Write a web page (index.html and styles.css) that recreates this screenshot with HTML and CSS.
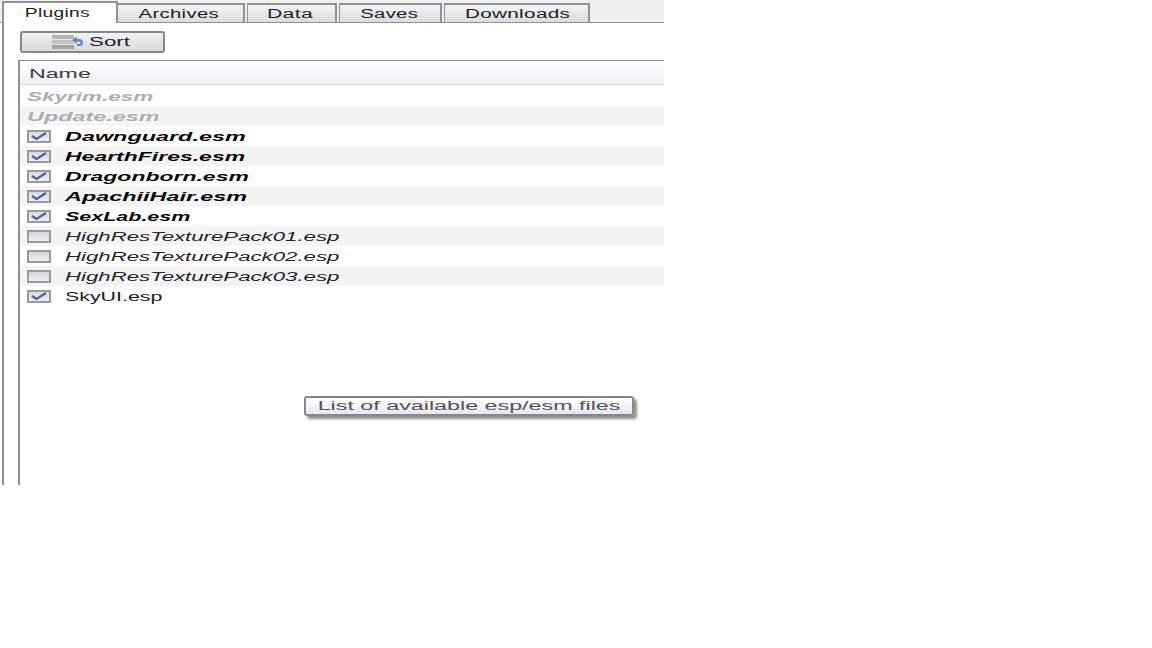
FILE: index.html
```html
<!DOCTYPE html>
<html lang="en">
<head>
<meta charset="utf-8">
<title>Plugins</title>
<link rel="stylesheet" href="styles.css">
</head>
<body>
<div class="window">
  <div class="tabs">
    <div class="tab active"><span class="t">Plugins</span></div>
    <div class="tab archives"><span class="t">Archives</span></div>
    <div class="tab data"><span class="t">Data</span></div>
    <div class="tab saves"><span class="t">Saves</span></div>
    <div class="tab downloads"><span class="t">Downloads</span></div>
  </div>
  <div class="panel">
    <div class="toolbar">
      <button class="sort">
        <svg class="sort-icon" width="32" height="14" viewBox="0 0 32 14">
          <rect x="0" y="0" width="22" height="4" fill="#b4b6b5"/>
          <rect x="0" y="5" width="22" height="4" fill="#c2c4c3"/>
          <rect x="0" y="10" width="22" height="4" fill="#a4a6a5"/>
          <path d="M20 5 L25 1.5 V4 H27 Q31 4 31 8 Q31 11 27 11 H25 V9 H27 Q28.5 9 28.5 7.5 Q28.5 6.5 27 6.5 H25 V9 Z" fill="#5b8bc0"/>
        </svg>
        <span class="t">Sort</span>
      </button>
    </div>
    <div class="tree">
      <div class="head"><span class="t">Name</span></div>
      <div class="rows">
        <div class="row off skyrim"><span class="t">Skyrim.esm</span></div>
        <div class="row off alt"><span class="t">Update.esm</span></div>
        <div class="row master"><i class="box on"><svg width="18" height="8" viewBox="0 0 18 8"><path d="M2 4 L6.5 7 L16 1" fill="none" stroke="#4a5fa8" stroke-width="2.2"/></svg></i><span class="t">Dawnguard.esm</span></div>
        <div class="row master alt tight"><i class="box on"><svg width="18" height="8" viewBox="0 0 18 8"><path d="M2 4 L6.5 7 L16 1" fill="none" stroke="#4a5fa8" stroke-width="2.2"/></svg></i><span class="t">HearthFires.esm</span></div>
        <div class="row master tight"><i class="box on"><svg width="18" height="8" viewBox="0 0 18 8"><path d="M2 4 L6.5 7 L16 1" fill="none" stroke="#4a5fa8" stroke-width="2.2"/></svg></i><span class="t">Dragonborn.esm</span></div>
        <div class="row master alt"><i class="box on"><svg width="18" height="8" viewBox="0 0 18 8"><path d="M2 4 L6.5 7 L16 1" fill="none" stroke="#4a5fa8" stroke-width="2.2"/></svg></i><span class="t">ApachiiHair.esm</span></div>
        <div class="row master sexlab"><i class="box on"><svg width="18" height="8" viewBox="0 0 18 8"><path d="M2 4 L6.5 7 L16 1" fill="none" stroke="#4a5fa8" stroke-width="2.2"/></svg></i><span class="t">SexLab.esm</span></div>
        <div class="row ital alt"><i class="box"></i><span class="t">HighResTexturePack01.esp</span></div>
        <div class="row ital"><i class="box"></i><span class="t">HighResTexturePack02.esp</span></div>
        <div class="row ital alt"><i class="box"></i><span class="t">HighResTexturePack03.esp</span></div>
        <div class="row"><i class="box on"><svg width="18" height="8" viewBox="0 0 18 8"><path d="M2 4 L6.5 7 L16 1" fill="none" stroke="#4a5fa8" stroke-width="2.2"/></svg></i><span class="t">SkyUI.esp</span></div>
      </div>
    </div>
  </div>
  <div class="tooltip"><span class="t">List of available esp/esm files</span></div>
</div>
</body>
</html>
```
FILE: styles.css
```css
* { box-sizing: border-box; }
html, body { margin: 0; padding: 0; background: #fff; }
body { width: 1152px; height: 648px; overflow: hidden; font-family: "Liberation Sans", Arial, sans-serif; font-size: 12px; color: #1c1c28; }
.window { position: relative; width: 664px; height: 485px; display: flex; flex-direction: column; overflow: hidden; }
.t { display: inline-block; transform: scaleX(1.9); transform-origin: center; white-space: nowrap; }

.tabs { height: 23px; display: flex; align-items: flex-end; padding-left: 2px; background: #f0f0f0; border-bottom: 1px solid #8f9296; flex: none; }
.tab { height: 19px; margin-left: 2px; display: flex; align-items: center; justify-content: center; border: 2px solid #8f9296; border-bottom: 0; border-left-width: 1px; background: linear-gradient(#f4f4f4, #dcdcdc); letter-spacing: 0.2px; }
.tab.active { width: 116px; height: 22px; margin: 0 0 -1px 0; background: #fff; border-left-width: 2px; border-right-width: 2px; padding: 0 5px 0 0; position: relative; }
.tab.active .t { transform: scaleX(1.6); }
.tab.archives { width: 127px; margin-left: 0; border-left: 0; padding-right: 4px; }
.tab.archives .t { transform: scaleX(1.69); }
.tab.data { width: 90px; padding-right: 2px; }
.tab.data .t { transform: scaleX(1.77); }
.tab.saves { width: 103px; padding-right: 1px; }
.tab.saves .t { transform: scaleX(1.69); }
.tab.downloads { width: 146px; padding-left: 3px; }
.tab.downloads .t { transform: scaleX(1.72); }

.panel { flex: 1; display: flex; flex-direction: column; margin-left: 2px; background: #fff; border-left: 2px solid #8f9296; padding-left: 14px; min-height: 0; }
.toolbar { padding: 8px 0 7px 2px; flex: none; }
.sort { width: 145px; height: 22px; display: flex; align-items: center; gap: 5px; padding: 0 0 0 30px; border: 2px solid #85888c; border-radius: 3px; background: linear-gradient(#f3f3f3, #d8d8d8); font: inherit; color: inherit; font-size: 12px; }
.sort .t { transform: scaleX(1.86); transform-origin: left; }

.tree { flex: 1; border-top: 2px solid #8f9296; border-left: 2px solid #8f9296; min-height: 0; }
.head { height: 24px; margin-top: -1px; display: flex; align-items: center; padding-left: 9px; padding-top: 2px; background: linear-gradient(#fff 0, #f9fafb 8px, #eff0f2); border-bottom: 1px solid #d8dbdd; }
.head .t { transform: scaleX(1.93); transform-origin: left; color: #3a3a42; }
.rows { padding-top: 1px; }
.row { height: 20px; display: flex; align-items: center; padding-left: 7px; }
.row .t { transform: scaleX(1.78); transform-origin: left; margin-top: 2px; }
.row.alt { background: #f4f4f4; }
.row.off { font-style: italic; font-weight: 700; color: #adadb2; }
.row.off .t, .row.master .t { transform: scaleX(1.95); }
.row.off.skyrim .t { transform: scaleX(1.875); }
.row.master { font-style: italic; font-weight: 700; color: #08080e; }
.row.master.tight .t { transform: scaleX(1.915); }
.row.master.sexlab .t { transform: scaleX(1.79); }
.row.ital { font-style: italic; color: #22222e; }
.row.ital .t { transform: scaleX(1.85); }
.box { width: 24px; height: 13px; margin-right: 14px; border: 2px solid #9a9a9a; background: linear-gradient(#d4d4d8, #f0f0f2); display: flex; align-items: center; justify-content: center; flex: none; }
.box.on { background: linear-gradient(#d6d8e4, #eef0f4); }

.tooltip { position: absolute; left: 304px; top: 396px; width: 330px; height: 20px; display: flex; align-items: center; justify-content: center; border: 2px solid #85888c; border-radius: 3px; background: linear-gradient(#fff, #e6e6f0); color: #55505c; box-shadow: 3px 3px 3px #8d8d8d; }
.tooltip .t { transform: scaleX(1.94); }
```
